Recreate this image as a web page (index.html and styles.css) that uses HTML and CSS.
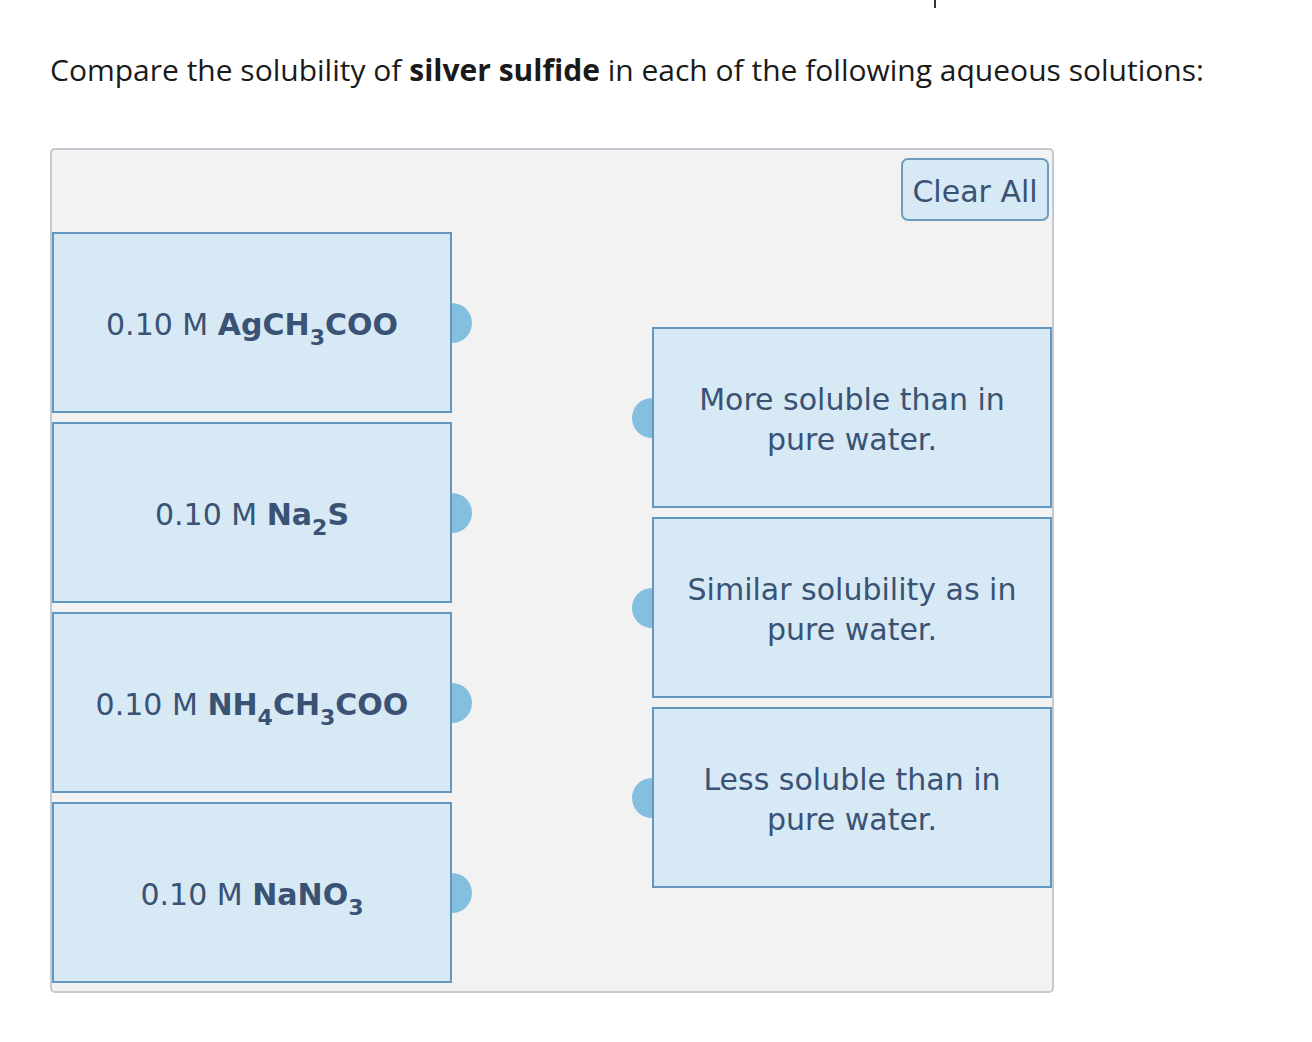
FILE: index.html
```html
<!DOCTYPE html>
<html>
<head>
<meta charset="utf-8">
<link rel="stylesheet" href="styles.css">
</head>
<body>
<div class="page">
  <span class="tick"></span>
  <p class="question">Compare the solubility of <b>silver sulfide</b> in each of the following aqueous solutions:</p>
  <div class="panel">
    <div class="panel-head">
      <button class="clear-btn">Clear All</button>
    </div>
    <div class="panel-body">
      <div class="col col-left">
        <div class="item item-left"><span class="dot"></span><span class="label">0.10 M <b>AgCH<sub>3</sub>COO</b></span></div>
        <div class="item item-left"><span class="dot"></span><span class="label">0.10 M <b>Na<sub>2</sub>S</b></span></div>
        <div class="item item-left"><span class="dot"></span><span class="label">0.10 M <b>NH<sub>4</sub>CH<sub>3</sub>COO</b></span></div>
        <div class="item item-left"><span class="dot"></span><span class="label">0.10 M <b>NaNO<sub>3</sub></b></span></div>
      </div>
      <div class="col col-right">
        <div class="item item-right"><span class="dot"></span><span class="label">More soluble than in<br>pure water.</span></div>
        <div class="item item-right"><span class="dot"></span><span class="label">Similar solubility as in<br>pure water.</span></div>
        <div class="item item-right"><span class="dot"></span><span class="label">Less soluble than in<br>pure water.</span></div>
      </div>
    </div>
  </div>
</div>
</body>
</html>
```

FILE: styles.css
```css
html, body {
  margin: 0;
  padding: 0;
  background: #ffffff;
}

.page {
  position: relative;
  padding: 0 0 0 50px;
  width: 1250px;
}

.tick {
  position: absolute;
  left: 934px;
  top: 0;
  width: 2px;
  height: 8px;
  background: #333;
}

.question {
  margin: 0;
  padding-top: 50px;
  font-family: "Open Sans", sans-serif;
  font-size: 30px;
  line-height: 40px;
  color: #1a1a1a;
  white-space: nowrap;
}

.question b {
  font-weight: 700;
}

.panel {
  margin-top: 58px;
  width: 1000px;
  height: 841px;
  background: #f2f2f2;
  border: 2px solid #c4cad2;
  border-radius: 5px;
  display: flex;
  flex-direction: column;
}

.panel-head {
  display: flex;
  justify-content: flex-end;
  padding: 8px 3px 0 0;
}

.clear-btn {
  width: 148px;
  height: 63px;
  background: #d6e9f5;
  border: 2px solid #6e9cc0;
  border-radius: 7px;
  font-family: "DejaVu Sans", Verdana, sans-serif;
  font-size: 30px;
  color: #3a5274;
  padding: 4px 0 0 0;
}

.panel-body {
  display: flex;
  justify-content: space-between;
  margin-top: 11px;
}

.col {
  position: relative;
  z-index: 0;
  display: flex;
  flex-direction: column;
  gap: 9px;
}

.col-right {
  padding-top: 95px;
}

.item {
  position: relative;
  box-sizing: border-box;
  width: 400px;
  height: 181px;
  padding-top: 4px;
  background: #d6e9f5;
  border: 2px solid #6497bf;
  display: flex;
  align-items: center;
  justify-content: center;
  text-align: center;
  font-family: "DejaVu Sans", Verdana, sans-serif;
  font-size: 30px;
  line-height: 40px;
  color: #3a5274;
}

.item b {
  font-weight: 700;
}

.item sub {
  font-size: 22px;
  line-height: 0;
  vertical-align: -10px;
}

.dot {
  position: absolute;
  top: 50%;
  width: 40px;
  height: 40px;
  margin-top: -20px;
  border-radius: 50%;
  background: #84bfdf;
  z-index: -1;
}

.item-left .dot {
  right: -22px;
}

.item-right .dot {
  left: -22px;
}
```
